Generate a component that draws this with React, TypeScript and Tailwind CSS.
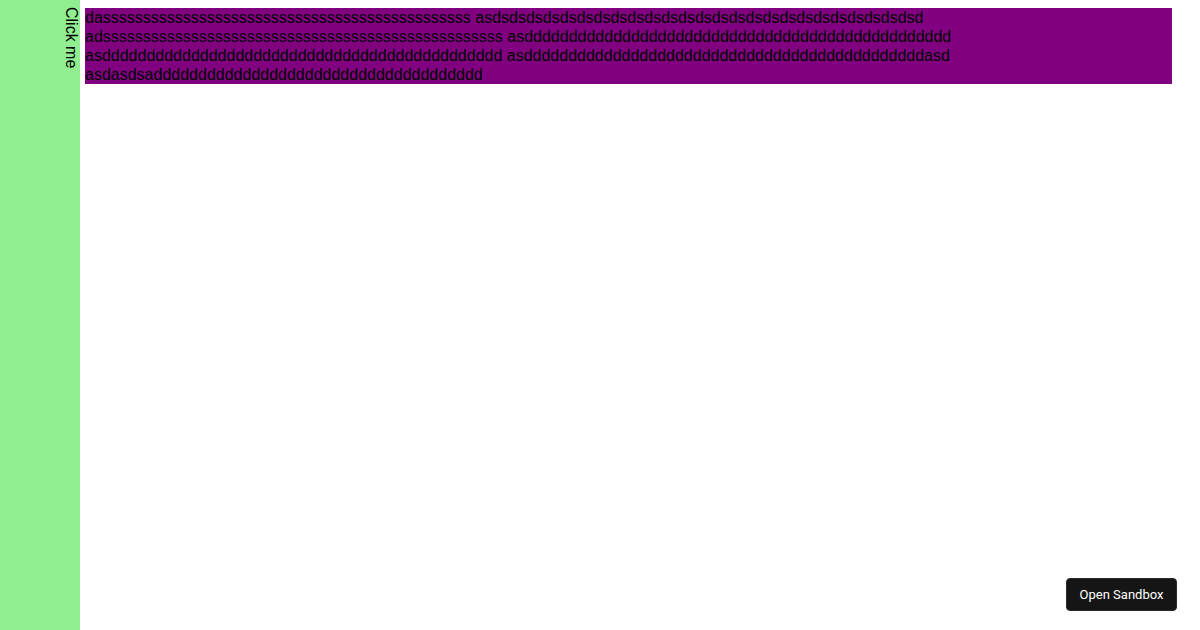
import React from 'react';

const TEXT = [
    'da' + 's'.repeat(46),
    'a' + 'sd'.repeat(26),
    'ad' + 's'.repeat(50),
    'as' + 'd'.repeat(48),
    'as' + 'd'.repeat(45),
    'as' + 'd'.repeat(45) + 'asd',
    'asdasdsa' + 'd'.repeat(37),
].join(' ');

export default function App() {
    return (
        <div className="relative flex h-screen w-full bg-white font-['Liberation_Sans',Arial,sans-serif] text-black">
            {/* Sidebar */}
            <div className="flex h-full w-20 shrink-0 items-start justify-end bg-[#90ee90] pt-[7px]">
                <button className="text-base leading-[18px] [writing-mode:vertical-rl]">Click me</button>
            </div>

            {/* Content */}
            <div className="ml-[5px] mr-[28px] mt-2 flex-1 self-start bg-[#800080] text-base leading-[19px]">
                {TEXT}
            </div>

            {/* Sandbox overlay */}
            <button className="absolute bottom-[19px] right-[23px] h-[33px] w-[111px] rounded-[4px] border border-[#2a2a2a] bg-[#151515] font-['Roboto',sans-serif] text-[13px] text-white">
                Open Sandbox
            </button>
        </div>
    );
}
